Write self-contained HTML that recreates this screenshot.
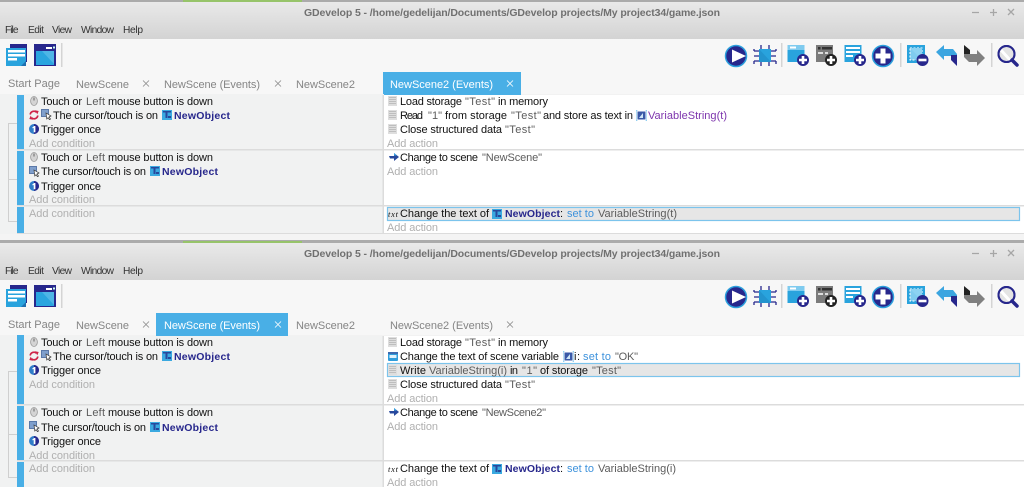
<!DOCTYPE html>
<html><head><meta charset="utf-8"><title>GDevelop 5</title>
<style>
html,body{margin:0;padding:0;background:#f2f2f2;width:1024px;height:487px;overflow:hidden}
svg{display:block;filter:blur(.25px)}
text{font-family:"Liberation Sans",sans-serif;font-size:11px;fill:#111}
.g{fill:#5c5c5c}.a{fill:#b0b0b0}.n{fill:#27278c;font-weight:bold;font-size:10.500px}.b{fill:#3d92dc}.p{fill:#7d35ad}
.t{fill:#858585}.w{fill:#fff}.m{fill:#333;font-size:10.200px}
.h{fill:#707070;font-weight:bold;font-size:10.500px}
</style></head><body>
<svg width="1024" height="487" viewBox="0 0 1024 487" xmlns="http://www.w3.org/2000/svg">
<defs>
<linearGradient id="tg" x1="0" y1="0" x2="0" y2="1"><stop offset="0" stop-color="#e9e9e9"/><stop offset="1" stop-color="#d3d3d3"/></linearGradient>
<g id="plusb"><circle cx="0" cy="0" r="6" fill="#27278c"/><path d="M-1.3-4h2.6v2.7H4v2.6H1.3V4h-2.6V1.300H-4v-2.600h2.700z" fill="#fff"/></g>
<g id="plusk"><circle cx="0" cy="0" r="6" fill="#222"/><path d="M-1.3-4h2.6v2.7H4v2.6H1.3V4h-2.6V1.300H-4v-2.600h2.700z" fill="#fff"/></g>
<g id="tbar">
 <rect x="0" y="39" width="1024" height="55" fill="#f7f7f7"/>
 <rect x="0" y="2" width="1024" height="37" fill="url(#tg)"/>
 <!-- left icons -->
 <rect x="10" y="44" width="17" height="18" fill="#27278c"/>
 <rect x="6" y="48" width="20" height="18" fill="#29a3dd"/>
 <path d="M8 50h17v2.500H8zM8 54h17v2.500H8zM8 58h9v2.500H8z" fill="#fff"/>
 <path d="M21 66h5V61z" fill="#1e6fb0"/>
 <rect x="34" y="44" width="22" height="22" fill="#27278c"/>
 <rect x="36" y="51" width="18" height="14" fill="#2aa5df"/>
 <path d="M42 51h12v13z" fill="#4eb6e6"/>
 <path d="M46 47h6v2h-6z" fill="#fff"/><rect x="53" y="46.500" width="2" height="2" fill="#cfe"/>
 <rect x="61" y="43" width="1.500" height="24" fill="#d4d4d4"/>
 <!-- play -->
 <circle cx="736" cy="56" r="10.500" fill="#27278c"/><circle cx="736" cy="56" r="10.500" fill="none" stroke="#2b9fdc" stroke-width="1.500"/>
 <path d="M732 49.500l14 6.500-14 6.500z" fill="#fff"/>
 <!-- chip -->
 <g fill="none" stroke="#27278c" stroke-width="1.300"><path d="M754 51h5M754 56h5M754 61h5M771 51h5M771 56h5M771 61h5M761 45v5M769 45v5M761 61v5M769 61v5M754 51v-2M776 51v-2M754 61v3M776 61v3"/></g>
 <rect x="759" y="49" width="12" height="13" fill="#29a3dd"/>
 <path d="M759 49l12 13h-12z" fill="#1f8ac4" opacity=".6"/>
 <rect x="781" y="43" width="1.500" height="24" fill="#d4d4d4"/>
 <!-- add 1 -->
 <rect x="787.500" y="45" width="17" height="17" fill="#29a3dd"/><rect x="787.500" y="45" width="17" height="5" fill="#7fcbef"/><rect x="790" y="46.500" width="6" height="2" fill="#fff"/>
 <use href="#plusb" x="803" y="60"/>
 <!-- add 2 -->
 <rect x="816" y="45" width="17" height="17" fill="#7b7b7b"/><rect x="818" y="47" width="2.500" height="2.500" fill="#333"/><rect x="822" y="47" width="10" height="2.500" fill="#333"/><path d="M818 52h5v2h-5zM825 52h3v2h-3z" fill="#ddd"/>
 <use href="#plusk" x="831" y="60"/>
 <!-- add 3 -->
 <rect x="844.500" y="45" width="17" height="17" fill="#29a3dd"/><path d="M846 47h14v2h-14zM846 51h14v2h-14zM846 55h7v2h-7z" fill="#fff"/>
 <use href="#plusb" x="860" y="60"/>
 <!-- plus -->
 <circle cx="883" cy="56" r="10.500" fill="#27278c"/><circle cx="883" cy="56" r="10.500" fill="none" stroke="#2b9fdc" stroke-width="1.500"/>
 <path d="M880.500 48.500h5v5h5v5h-5v5h-5v-5h-5v-5h5z" fill="#fff"/>
 <rect x="900" y="43" width="1.500" height="24" fill="#d4d4d4"/>
 <!-- delete -->
 <rect x="907" y="45" width="18" height="18" fill="#29a3dd"/><rect x="910" y="48" width="12" height="12" fill="#7fcbef" stroke="#fff" stroke-width="1" stroke-dasharray="2 1.500"/>
 <path d="M910 48h12v12z" fill="#8cd2f2"/>
 <circle cx="922.500" cy="60" r="6" fill="#27278c"/><rect x="918.500" y="58.700" width="8" height="2.600" fill="#fff"/>
 <!-- undo -->
 <path d="M936 52l8-7v4h9l4 5v2h-13v4z" fill="#3ba5e0"/><path d="M951 55h6v11l-6-6z" fill="#27278c"/>
 <!-- redo -->
 <path d="M964 45l6 5v5h-6z" fill="#222"/><path d="M964 54h13v-4l8 8-8 8v-4h-8l-5-5z" fill="#808080"/>
 <rect x="991" y="43" width="1.500" height="24" fill="#d4d4d4"/>
 <!-- search -->
 <circle cx="1006.500" cy="54" r="8" fill="#e4e4e4" stroke="#27278c" stroke-width="2"/><path d="M1001 50l9 10" stroke="#fff" stroke-width="3"/>
 <circle cx="1006.500" cy="54" r="8" fill="none" stroke="#27278c" stroke-width="2"/>
 <path d="M1012 60l5 5" stroke="#27278c" stroke-width="3.500" stroke-linecap="round"/>
 <!-- window buttons -->
 <g stroke="#a6a6a6" stroke-width="1.300" fill="none"><path d="M972 12.500h7M990 12.500h7M993.500 9v7M1008 9l6 6M1014 9l-6 6"/></g>
 <!-- top line -->
 <rect x="0" y="0" width="1024" height="2" fill="#ababab"/><rect x="183" y="0" width="119" height="2" fill="#97c46a"/>
</g>
<symbol id="mouse" width="10" height="10" viewBox="0 0 10 10"><ellipse cx="5" cy="5" rx="3.400" ry="4.500" fill="#d4d4d4" stroke="#999" stroke-width=".8"/><path d="M5 1.500v3" stroke="#666"/></symbol>
<symbol id="sync" width="10" height="10" viewBox="0 0 10 10"><path d="M1.200 4.500A3.800 3.800 0 0 1 7.500 2.200" fill="none" stroke="#cf2347" stroke-width="1.700"/><path d="M6 0.300L9.700 1 8.300 4.400z" fill="#cf2347"/><path d="M8.800 5.500A3.800 3.800 0 0 1 2.500 7.800" fill="none" stroke="#cf2347" stroke-width="1.700"/><path d="M4 9.700L.3 9 1.700 5.600z" fill="#cf2347"/></symbol>
<symbol id="cur" width="11" height="11" viewBox="0 0 11 11"><rect x=".5" y=".5" width="7" height="7" fill="#7f9fcc" stroke="#5a78a8"/><path d="M5 4l5 3-2 1 1.500 2-1 .7L7 8.700 5.800 10z" fill="#fff" stroke="#333" stroke-width=".7"/></symbol>
<symbol id="obj" width="10" height="10" viewBox="0 0 10 10"><rect width="10" height="10" fill="#3aa9e0"/><rect x="1" y="1" width="8" height="1.500" fill="#27489c"/><rect x="3.500" y="2" width="2" height="6" fill="#27489c"/><rect x="6" y="6" width="3" height="2" fill="#27489c"/></symbol>
<symbol id="one" width="10" height="10" viewBox="0 0 10 10"><circle cx="5" cy="5" r="5" fill="#2f7cc8"/><path d="M5 0a5 5 0 0 1 0 10z" fill="#27278c"/><path d="M3.300 3.400L5.200 2h1.200v6.200H4.700V3.900L3.800 4.500z" fill="#fff"/></symbol>
<symbol id="doc" width="9" height="10" viewBox="0 0 9 10"><rect width="9" height="10" fill="#dedede"/><path d="M1 1.500h7M1 3.500h7M1 5.500h7M1 7.500h7" stroke="#b4b4b4" stroke-width=".8"/></symbol>
<symbol id="arrow" width="11" height="8" viewBox="0 0 11 8"><path d="M1 3h5V0l5 4-5 4V5.500H2z" fill="#27489c"/><path d="M0 2.500h6V0l3 2.500z" fill="#3ba5e0"/></symbol>
<symbol id="var" width="11" height="11" viewBox="0 0 11 11"><rect x="1.500" y="1.500" width="8" height="8" fill="#3a5aa8"/><path d="M1.500 0H0v11h1.500M9.500 0H11v11H9.500" fill="none" stroke="#7ec6ee" stroke-width="1.200"/><path d="M3 8l4-5v5z" fill="#cfe6f7"/></symbol>
<symbol id="svar" width="10" height="9" viewBox="0 0 10 9"><rect width="10" height="9" rx="1" fill="#2f9ddb"/><rect x="1.500" y="3" width="7" height="3" fill="#dff1fb"/><rect x="0" y="0" width="10" height="2" fill="#3a6ab0"/></symbol>
<path id="xm" d="M-3-3l6 6M3-3l-6 6" fill="none" stroke-width=".8"/>
</defs>

<rect width="1024" height="487" fill="#f2f2f2"/>

<!-- ============ WINDOW 1 ============ -->
<use href="#tbar"/>
<text x="304" y="16" class="h" textLength="416">GDevelop 5 - /home/gedelijan/Documents/GDevelop projects/My project34/game.json</text>
<text x="5" y="33" class="m" textLength="13.500">File</text><text x="28" y="33" class="m" textLength="16">Edit</text><text x="52" y="33" class="m" textLength="20">View</text><text x="81" y="33" class="m" textLength="33">Window</text><text x="123" y="33" class="m" textLength="20">Help</text>
<text x="8" y="87" class="t" textLength="52">Start Page</text>
<text x="76" y="88" class="t" textLength="53">NewScene</text><use href="#xm" x="146" y="83.500" stroke="#8a8a8a"/>
<text x="164" y="88" class="t" textLength="96">NewScene (Events)</text><use href="#xm" x="278" y="83.500" stroke="#8a8a8a"/>
<text x="296" y="88" class="t" textLength="59">NewScene2</text>
<rect x="383" y="72" width="138" height="23" fill="#49afe6"/>
<text x="390" y="88" class="w" textLength="103">NewScene2 (Events)</text><use href="#xm" x="510" y="83.500" stroke="#fff"/>

<rect x="0" y="94" width="384" height="140" fill="#f1f2f2"/>
<rect x="384" y="95" width="640" height="139" fill="#fff"/>
<rect x="382.500" y="95" width="1.500" height="139" fill="#dcdcdc"/>
<rect x="17" y="149" width="1007" height="1.500" fill="#dcdcdc"/><rect x="17" y="205" width="1007" height="1.500" fill="#dcdcdc"/><rect x="17" y="233" width="1007" height="1.500" fill="#dcdcdc"/>
<rect x="17" y="95" width="7" height="54" fill="#49afe6"/><rect x="17" y="151" width="7" height="54" fill="#49afe6"/><rect x="17" y="207" width="7" height="26" fill="#49afe6"/>
<path d="M17 123.500H8.500V221.500H17M8.500 179.500H17" fill="none" stroke="#cfcfcf"/>
<rect x="0" y="234" width="1024" height="6" fill="#f4f4f4"/>

<use href="#mouse" x="29" y="96"/><text x="41" y="105" textLength="41">Touch or</text><text x="86" y="105" class="g" textLength="19">Left</text><text x="108" y="105" textLength="105">mouse button is down</text>
<use href="#sync" x="29" y="110"/><use href="#cur" x="41" y="109"/><text x="53" y="119" textLength="105">The cursor/touch is on</text><use href="#obj" x="162" y="110"/><text x="174" y="119" class="n" textLength="56">NewObject</text>
<use href="#one" x="29" y="124"/><text x="41" y="133" textLength="60">Trigger once</text>
<text x="29" y="147" class="a" textLength="66">Add condition</text>

<use href="#mouse" x="29" y="152"/><text x="41" y="161" textLength="41">Touch or</text><text x="86" y="161" class="g" textLength="19">Left</text><text x="108" y="161" textLength="105">mouse button is down</text>
<use href="#cur" x="29" y="166"/><text x="41" y="175" textLength="105">The cursor/touch is on</text><use href="#obj" x="150" y="166"/><text x="162" y="175" class="n" textLength="56">NewObject</text>
<use href="#one" x="29" y="181"/><text x="41" y="190" textLength="60">Trigger once</text>
<text x="29" y="203" class="a" textLength="66">Add condition</text>
<text x="29" y="217" class="a" textLength="66">Add condition</text>

<use href="#doc" x="388" y="96"/><text x="400" y="105" textLength="62">Load storage</text><text x="465" y="105" class="g" textLength="30">"Test"</text><text x="498" y="105" textLength="50">in memory</text>
<use href="#doc" x="388" y="110"/><text x="400" y="119" textLength="23">Read</text><text x="428" y="119" class="g" textLength="14">"1"</text><text x="445" y="119" textLength="62">from storage</text><text x="511" y="119" class="g" textLength="30">"Test"</text><text x="543" y="119" textLength="90">and store as text in</text><use href="#var" x="636" y="110"/><text x="648" y="119" class="p" textLength="79">VariableString(t)</text>
<use href="#doc" x="388" y="124"/><text x="400" y="133" textLength="102">Close structured data</text><text x="505" y="133" class="g" textLength="30">"Test"</text>
<text x="387" y="147" class="a" textLength="51">Add action</text>
<use href="#arrow" x="388" y="153"/><text x="400" y="161" textLength="78">Change to scene</text><text x="482" y="161" class="g" textLength="60">"NewScene"</text>
<text x="387" y="175" class="a" textLength="51">Add action</text>
<rect x="387.500" y="207.500" width="632" height="13" fill="#e6e6e6" stroke="#7cc4ec" stroke-width="1.200"/>
<text x="388" y="217" style="font-size:8.500px;font-style:italic;font-family:'Liberation Serif',serif" fill="#444" textLength="10">txt</text>
<text x="400" y="217" textLength="89">Change the text of</text><use href="#obj" x="492" y="209"/><text x="505" y="217" class="n" textLength="55">NewObject</text><text x="560" y="217">:</text><text x="567" y="217" class="b" textLength="27">set to</text><text x="598" y="217" class="g" textLength="79">VariableString(t)</text>
<text x="387" y="231" class="a" textLength="51">Add action</text>

<!-- ============ WINDOW 2 ============ -->
<use href="#tbar" y="241"/>
<rect x="0" y="240" width="1024" height="1" fill="#ababab"/>
<text x="304" y="257" class="h" textLength="416">GDevelop 5 - /home/gedelijan/Documents/GDevelop projects/My project34/game.json</text>
<text x="5" y="274" class="m" textLength="13.500">File</text><text x="28" y="274" class="m" textLength="16">Edit</text><text x="52" y="274" class="m" textLength="20">View</text><text x="81" y="274" class="m" textLength="33">Window</text><text x="123" y="274" class="m" textLength="20">Help</text>
<text x="8" y="328" class="t" textLength="52">Start Page</text>
<text x="76" y="329" class="t" textLength="53">NewScene</text><use href="#xm" x="146" y="324.500" stroke="#8a8a8a"/>
<rect x="156" y="313" width="132" height="23" fill="#49afe6"/>
<text x="164" y="329" class="w" textLength="96">NewScene (Events)</text><use href="#xm" x="278" y="324.500" stroke="#fff"/>
<text x="296" y="329" class="t" textLength="59">NewScene2</text>
<text x="390" y="329" class="t" textLength="103">NewScene2 (Events)</text><use href="#xm" x="510" y="324.500" stroke="#8a8a8a"/>

<rect x="0" y="336" width="384" height="151" fill="#f1f2f2"/>
<rect x="384" y="336" width="640" height="151" fill="#fff"/>
<rect x="382.500" y="336" width="1.500" height="151" fill="#dcdcdc"/>
<rect x="17" y="404" width="1007" height="1.500" fill="#dcdcdc"/><rect x="17" y="460" width="1007" height="1.500" fill="#dcdcdc"/>
<rect x="17" y="335" width="7" height="69" fill="#49afe6"/><rect x="17" y="406" width="7" height="54" fill="#49afe6"/><rect x="17" y="462" width="7" height="25" fill="#49afe6"/>
<path d="M17 371.500H8.500V477.500H17M8.500 434.500H17" fill="none" stroke="#cfcfcf"/>

<use href="#mouse" x="29" y="337"/><text x="41" y="346" textLength="41">Touch or</text><text x="86" y="346" class="g" textLength="19">Left</text><text x="108" y="346" textLength="105">mouse button is down</text>
<use href="#sync" x="29" y="351"/><use href="#cur" x="41" y="350"/><text x="53" y="360" textLength="105">The cursor/touch is on</text><use href="#obj" x="162" y="351"/><text x="174" y="360" class="n" textLength="56">NewObject</text>
<use href="#one" x="29" y="365"/><text x="41" y="374" textLength="60">Trigger once</text>
<text x="29" y="388" class="a" textLength="66">Add condition</text>

<use href="#mouse" x="29" y="407"/><text x="41" y="416" textLength="41">Touch or</text><text x="86" y="416" class="g" textLength="19">Left</text><text x="108" y="416" textLength="105">mouse button is down</text>
<use href="#cur" x="29" y="421"/><text x="41" y="431" textLength="105">The cursor/touch is on</text><use href="#obj" x="150" y="422"/><text x="162" y="431" class="n" textLength="56">NewObject</text>
<use href="#one" x="29" y="436"/><text x="41" y="445" textLength="60">Trigger once</text>
<text x="29" y="459" class="a" textLength="66">Add condition</text>
<text x="29" y="472" class="a" textLength="66">Add condition</text>

<use href="#doc" x="388" y="337"/><text x="400" y="346" textLength="62">Load storage</text><text x="465" y="346" class="g" textLength="30">"Test"</text><text x="498" y="346" textLength="50">in memory</text>
<use href="#svar" x="388" y="352"/><text x="400" y="360" textLength="159">Change the text of scene variable</text><use href="#var" x="563" y="351"/><text x="574" y="360" textLength="6">i:</text><text x="583" y="360" class="b" textLength="28">set to</text><text x="615" y="360" class="g" textLength="23">"OK"</text>
<rect x="387.500" y="363.500" width="632" height="13" fill="#e6e6e6" stroke="#7cc4ec" stroke-width="1.200"/>
<use href="#doc" x="388" y="365"/><text x="400" y="374" textLength="26">Write</text><text x="429" y="374" class="g" textLength="78">VariableString(i)</text><text x="510" y="374" textLength="8">in</text><text x="522" y="374" class="g" textLength="15">"1"</text><text x="540" y="374" textLength="48">of storage</text><text x="592" y="374" class="g" textLength="29">"Test"</text>
<use href="#doc" x="388" y="379"/><text x="400" y="388" textLength="102">Close structured data</text><text x="505" y="388" class="g" textLength="30">"Test"</text>
<text x="387" y="402" class="a" textLength="51">Add action</text>
<use href="#arrow" x="388" y="408"/><text x="400" y="416" textLength="78">Change to scene</text><text x="482" y="416" class="g" textLength="64">"NewScene2"</text>
<text x="387" y="430" class="a" textLength="51">Add action</text>
<text x="388" y="472" style="font-size:8.500px;font-style:italic;font-family:'Liberation Serif',serif" fill="#444" textLength="10">txt</text>
<text x="400" y="472" textLength="89">Change the text of</text><use href="#obj" x="492" y="464"/><text x="505" y="472" class="n" textLength="55">NewObject</text><text x="560" y="472">:</text><text x="567" y="472" class="b" textLength="27">set to</text><text x="598" y="472" class="g" textLength="78">VariableString(i)</text>
<text x="387" y="486" class="a" textLength="51">Add action</text>
</svg>
</body></html>
